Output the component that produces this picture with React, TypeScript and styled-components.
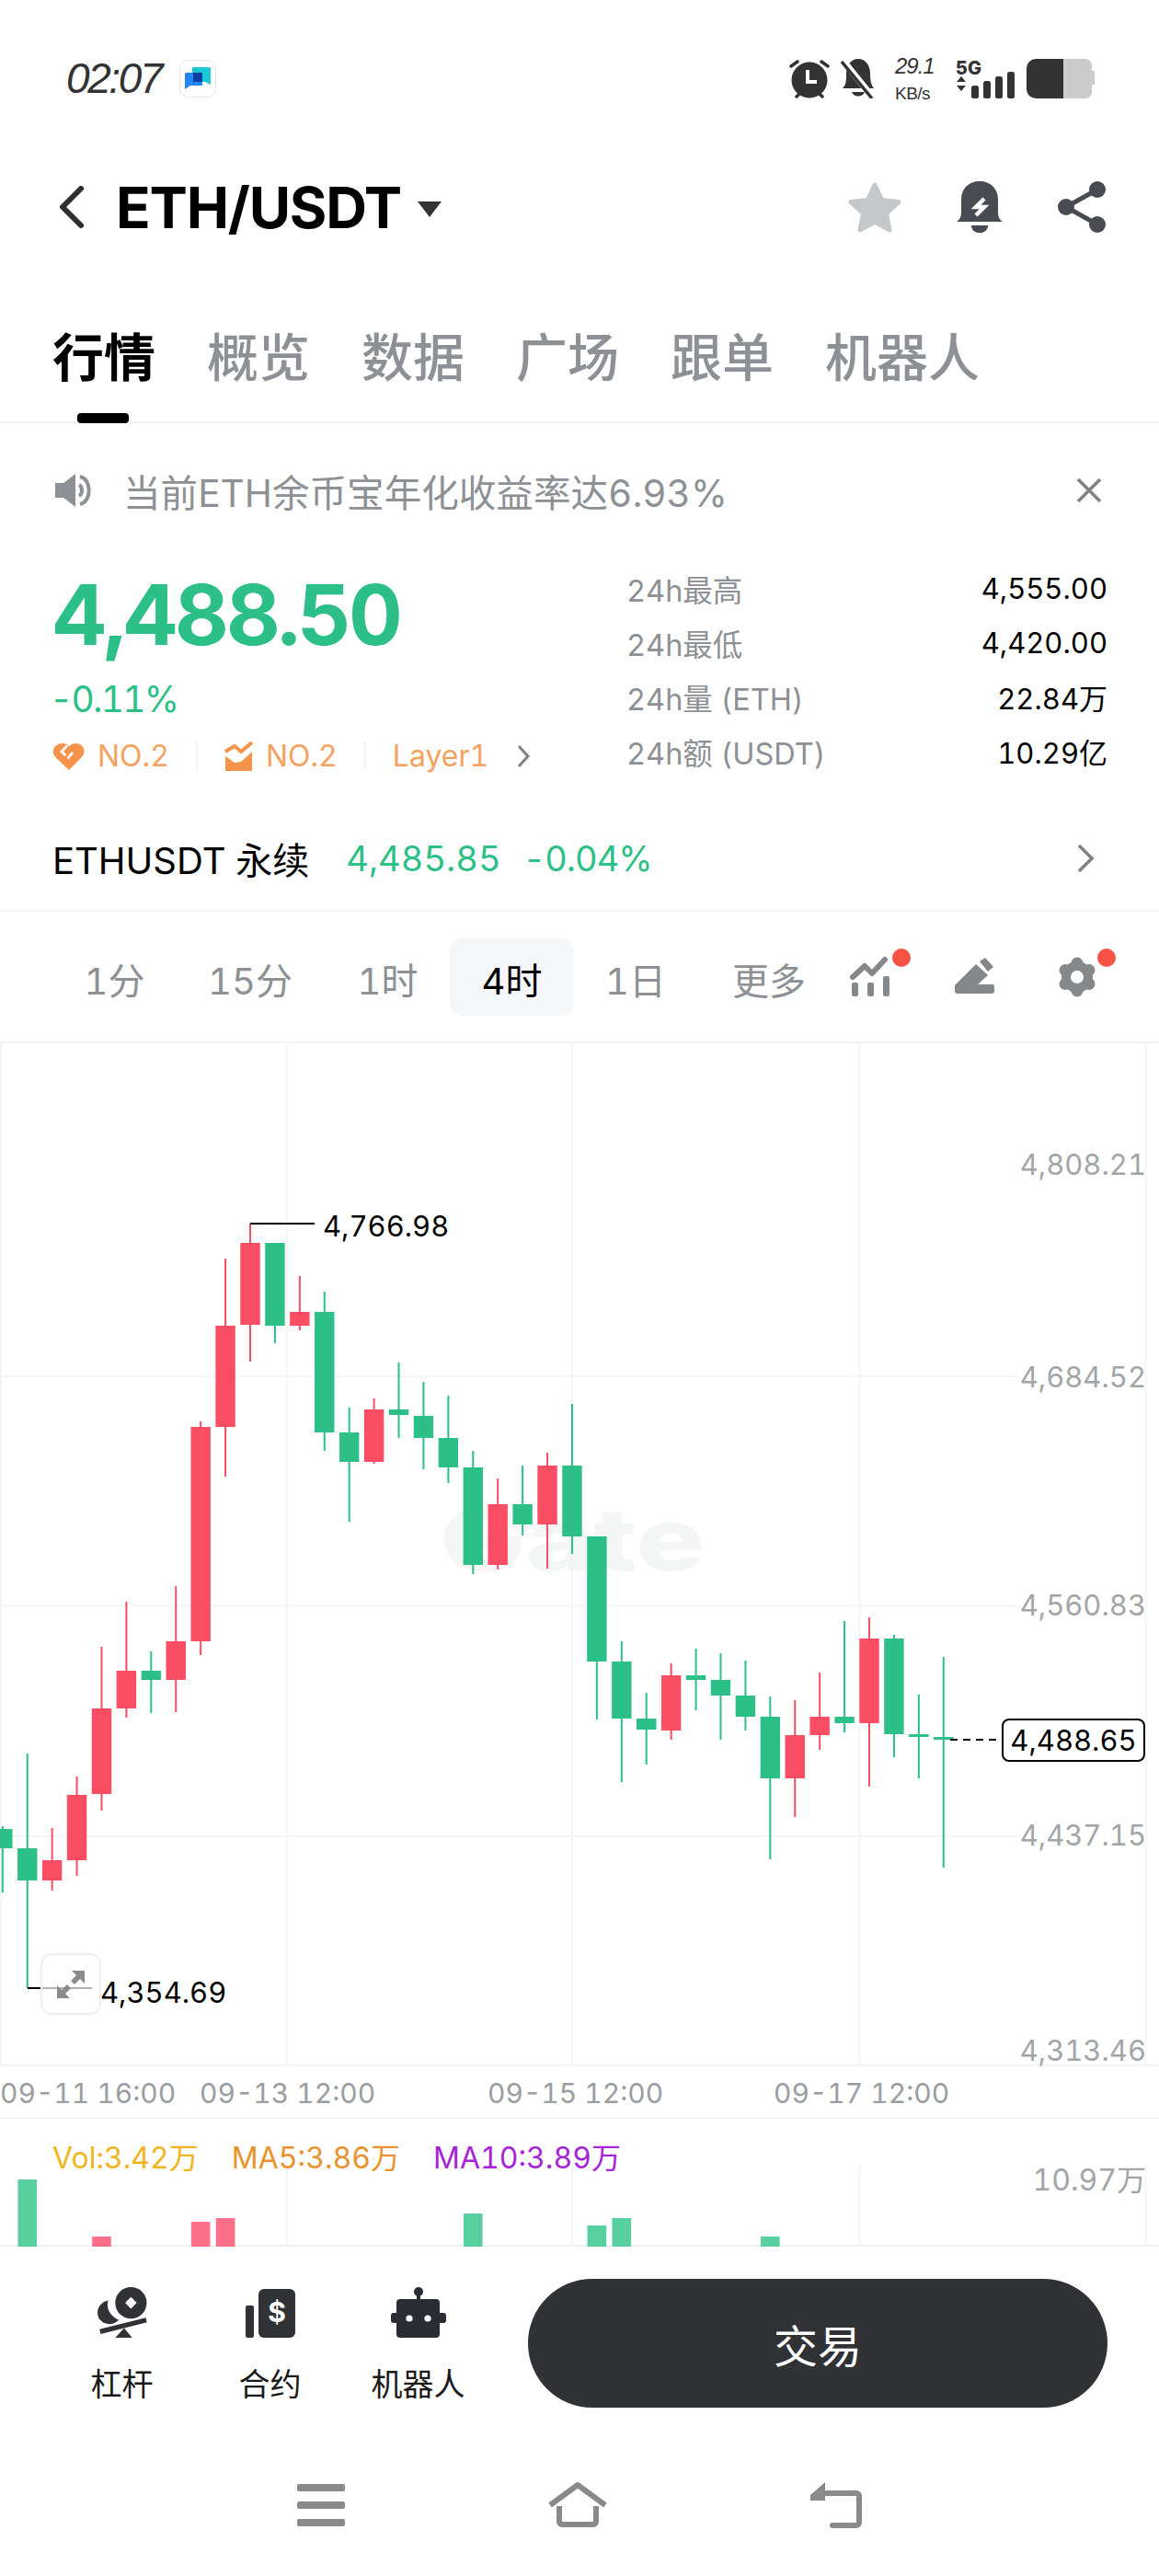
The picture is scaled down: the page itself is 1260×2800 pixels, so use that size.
import styled, { createGlobalStyle } from 'styled-components';

const SANS = `Inter, "Noto Sans CJK SC", sans-serif`;
const NARROW = `"Liberation Sans", sans-serif`;
const GREEN = '#2cbf87';
const RED = '#f84d63';
const GREY = '#8d9094';

// [wickTop, wickBottom, bodyTop, bodyBottom, isUp], one entry per 4h candle, page coordinates
const CANDLES: [number, number, number, number, boolean][] = [
  [1986, 2058, 1989, 2010, false],
  [1907, 2162, 2010, 2045, false],
  [1988, 2056, 2023, 2045, true],
  [1932, 2040, 1952, 2023, true],
  [1791, 1969, 1858, 1951, true],
  [1742, 1868, 1817, 1858, true],
  [1796, 1863, 1817, 1827, false],
  [1725, 1862, 1785, 1827, true],
  [1546, 1800, 1552, 1785, true],
  [1369, 1606, 1442, 1552, true],
  [1331, 1481, 1352, 1441, true],
  [1352, 1461, 1352, 1442, false],
  [1388, 1447, 1427, 1442, true],
  [1405, 1578, 1427, 1558, false],
  [1531, 1655, 1558, 1590, false],
  [1521, 1592, 1533, 1590, true],
  [1482, 1564, 1533, 1539, false],
  [1503, 1598, 1540, 1564, false],
  [1518, 1613, 1564, 1596, false],
  [1578, 1712, 1596, 1702, false],
  [1608, 1707, 1636, 1702, true],
  [1594, 1670, 1636, 1658, false],
  [1580, 1706, 1594, 1658, true],
  [1527, 1690, 1594, 1671, false],
  [1671, 1870, 1671, 1807, false],
  [1785, 1938, 1807, 1869, false],
  [1841, 1919, 1869, 1881, false],
  [1809, 1892, 1822, 1882, true],
  [1793, 1860, 1822, 1827, false],
  [1798, 1892, 1827, 1844, false],
  [1806, 1882, 1844, 1867, false],
  [1845, 2022, 1867, 1934, false],
  [1849, 1976, 1887, 1934, true],
  [1819, 1903, 1867, 1887, true],
  [1763, 1884, 1867, 1874, false],
  [1759, 1943, 1782, 1874, true],
  [1778, 1911, 1782, 1886, false],
  [1843, 1934, 1886, 1889, false],
  [1802, 2031, 1889, 1892, false],
];

const candleX = (i: number) => 2.8 + i * 26.92;

const AXIS_PRICES: [string, number][] = [
  ['4,808.21', 1266],
  ['4,684.52', 1497],
  ['4,560.83', 1745],
  ['4,437.15', 1995],
  ['4,313.46', 2229],
];

// [candle index, top, isUp]
const VOLUMES: [number, number, boolean][] = [
  [1, 2370, false],
  [4, 2432, true],
  [8, 2416, true],
  [9, 2412, true],
  [19, 2407, false],
  [24, 2420, false],
  [25, 2412, false],
  [31, 2432, false],
];

const STATS = [
  ['24h最高', '4,555.00'],
  ['24h最低', '4,420.00'],
  ['24h量 (ETH)', '22.84万'],
  ['24h额 (USDT)', '10.29亿'],
];

const TABS = ['行情', '概览', '数据', '广场', '跟单', '机器人'];

const INTERVALS: [string, number][] = [
  ['1分', 131],
  ['15分', 164],
  ['1时', 135],
  ['4时', 135],
  ['1日', 134],
  ['更多', 156],
];

const GEAR_LOBES = Array.from({ length: 6 }, (_, i) => {
  const a = (i * Math.PI) / 3 - Math.PI / 2;
  return [22 + 15 * Math.cos(a), 22 + 15 * Math.sin(a)];
});

const Global = createGlobalStyle`
  html, body {
    margin: 0;
    background: #fff;
    font-family: ${SANS};
    font-variant-numeric: tabular-nums;
  }
  * {
    box-sizing: border-box;
  }
`;

const Page = styled.div`
  width: 1260px;
  height: 2800px;
  overflow: hidden;
  background: #fff;
`;

const StatusBar = styled.div`
  height: 170px;
  padding: 0 70px 0 72px;
  display: flex;
  align-items: center;
  justify-content: space-between;
`;

const StatusLeft = styled.div`
  display: flex;
  align-items: center;
  gap: 20px;
`;

const Clock = styled.span`
  font-family: ${NARROW};
  font-size: 46px;
  font-style: italic;
  color: #333;
  width: 103px;
  letter-spacing: -2.4px;
  line-height: 1;
`;

const AppBadge = styled.div`
  width: 40px;
  height: 41px;
  border: 1px solid #e6e6e6;
  border-radius: 10px;
  display: flex;
  align-items: center;
  justify-content: center;
`;

const StatusRight = styled.div`
  display: flex;
  align-items: center;
`;

const Speed = styled.div`
  width: 44px;
  margin: 0 22px 0 21px;
  display: flex;
  flex-direction: column;
  gap: 8px;
  color: #333;
  line-height: 1;
  font-family: ${NARROW};
`;

const SpeedValue = styled.span`
  font-size: 24px;
  font-style: italic;
  letter-spacing: -1px;
`;

const SpeedUnit = styled.span`
  font-size: 19px;
  letter-spacing: -0.5px;
`;

const Network = styled.div`
  display: flex;
  flex-direction: column;
  margin-right: 13px;
`;

const NetworkLabel = styled.span`
  font-size: 20px;
  font-weight: 800;
  color: #333;
  line-height: 1;
  margin-bottom: 6px;
`;

const Header = styled.div`
  height: 110px;
  padding: 0 58px 0 63px;
  display: flex;
  align-items: center;
`;

const Title = styled.span`
  margin-left: 35px;
  font-size: 62px;
  font-weight: 700;
  letter-spacing: -1.2px;
  color: #000;
`;

const Caret = styled.span`
  margin: 4px 0 0 18px;
  border-left: 13px solid transparent;
  border-right: 13px solid transparent;
  border-top: 17px solid #333;
`;

const HeaderActions = styled.div`
  margin-left: auto;
  display: flex;
  align-items: center;
  gap: 60px;
`;

const Tabs = styled.div`
  height: 180px;
  padding: 79px 0 0 57px;
  display: flex;
  gap: 56px;
  border-bottom: 2px solid #f2f3f4;
`;

const Tab = styled.div<{ $active?: boolean }>`
  position: relative;
  height: 101px;
  font-size: 56px;
  font-weight: ${(p) => (p.$active ? 700 : 500)};
  line-height: 60px;
  color: ${(p) => (p.$active ? '#000' : GREY)};

  &::after {
    content: '';
    display: ${(p) => (p.$active ? 'block' : 'none')};
    position: absolute;
    left: 27px;
    bottom: 0;
    width: 56px;
    height: 11px;
    border-radius: 4px;
    background: #000;
  }
`;

const Notice = styled.div`
  height: 148px;
  padding: 0 62px 2px 60px;
  display: flex;
  align-items: center;
  color: ${GREY};
`;

const NoticeText = styled.span`
  margin-left: 32px;
  font-size: 40.6px;
`;

const NoticeClose = styled.span`
  margin-left: auto;
  display: flex;
`;

const Summary = styled.div`
  height: 262px;
  padding: 0 56px 0 57px;
  display: flex;
  justify-content: space-between;
`;

const Quote = styled.div`
  display: flex;
  flex-direction: column;
`;

const LastPrice = styled.div`
  margin-top: 6px;
  font-size: 91px;
  font-weight: 700;
  letter-spacing: -3px;
  line-height: 108px;
  color: ${GREEN};
`;

const Change = styled.div`
  margin: 15px 0 0 -3px;
  font-size: 39px;
  letter-spacing: -1.8px;
  line-height: 46px;
  color: ${GREEN};
`;

const TagRow = styled.div`
  margin-top: 17px;
  display: flex;
  align-items: center;
  color: #f6a25f;
  font-size: 32px;
  line-height: 44px;
`;

const TagLabel = styled.span`
  margin-left: 14px;
`;

const TagDivider = styled.span`
  width: 2px;
  height: 32px;
  margin: 0 29px;
  background: #f4f2ef;
`;

const StatsList = styled.div`
  width: 523px;
  padding-top: 2px;
  display: flex;
  flex-direction: column;
`;

const StatRow = styled.div`
  height: 59px;
  display: flex;
  align-items: center;
  justify-content: space-between;
`;

const StatLabel = styled.span`
  font-size: 32.5px;
  color: ${GREY};
`;

const StatValue = styled.span`
  font-size: 31px;
  color: #000;
`;

const ContractRow = styled.div`
  height: 121px;
  padding: 6px 70px 0 57px;
  display: flex;
  align-items: center;
  border-bottom: 2px solid #f2f3f4;
  font-size: 38px;
`;

const ContractName = styled.span`
  font-size: 40px;
  color: #000;
`;

const ContractPrice = styled.span<{ $gap: number; $tight?: boolean }>`
  margin-left: ${(p) => p.$gap}px;
  letter-spacing: ${(p) => (p.$tight ? '-1px' : '0')};
  color: ${GREEN};
`;

const ContractArrow = styled.span`
  margin-left: auto;
  display: flex;
`;

const Toolbar = styled.div`
  height: 143px;
  padding-left: 59px;
  display: flex;
  align-items: center;
  border-bottom: 2px solid #f2f3f4;
`;

const Interval = styled.div<{ $active?: boolean; $width: number }>`
  width: ${(p) => p.$width}px;
  height: 84px;
  padding-top: 5px;
  display: flex;
  align-items: center;
  justify-content: center;
  border-radius: 14px;
  font-size: 40px;
  color: ${(p) => (p.$active ? '#000' : GREY)};
  background: ${(p) => (p.$active ? '#f5f6f7' : 'transparent')};
`;

const ToolIcon = styled.div<{ $left: number; $dot?: boolean }>`
  position: relative;
  margin-left: ${(p) => p.$left}px;
  display: flex;

  &::after {
    content: '';
    display: ${(p) => (p.$dot ? 'block' : 'none')};
    position: absolute;
    top: -9px;
    right: -20px;
    width: 20px;
    height: 20px;
    border-radius: 50%;
    background: #f75246;
  }
`;

const ChartPanel = styled.div`
  position: relative;
  height: 1110px;
`;

const ChartSvg = styled.svg`
  display: block;
  overflow: visible;
`;

const AxisText = styled.text`
  font-family: ${SANS};
  font-size: 31px;
  fill: #a2a5a8;
  text-anchor: end;
  dominant-baseline: central;
`;

const MarkText = styled.text`
  font-family: ${SANS};
  font-size: 31px;
  fill: #000;
  dominant-baseline: central;
`;

const Watermark = styled.text`
  font-family: ${SANS};
  font-size: 94px;
  font-weight: 800;
  fill: #f4f6f6;
`;

const PriceTag = styled.div`
  position: absolute;
  left: 1089px;
  top: 734px;
  width: 156px;
  height: 47px;
  border: 2px solid #000;
  border-radius: 8px;
  background: #fff;
  display: flex;
  align-items: center;
  justify-content: center;
  font-size: 31px;
  color: #000;
`;

const ExpandButton = styled.div`
  position: absolute;
  left: 44px;
  top: 989px;
  width: 66px;
  height: 67px;
  border: 2px solid #eeeff0;
  border-radius: 12px;
  background: rgba(255, 255, 255, 0.7);
  display: flex;
  align-items: center;
  justify-content: center;
`;

const TimeAxis = styled.div`
  height: 59px;
  padding-top: 2px;
  display: grid;
  grid-template-columns: 217px 313px 311px 1fr;
  align-items: center;
  border-top: 2px solid #f3f4f5;
  border-bottom: 2px solid #f3f4f5;
  font-size: 30px;
  color: #9a9da1;
`;

const VolumePanel = styled.div`
  position: relative;
  height: 139px;
  border-bottom: 2px solid #f0f1f2;
`;

const VolumeLegend = styled.div`
  position: absolute;
  left: 57px;
  top: 24px;
  display: flex;
  gap: 36px;
  font-size: 32px;
  line-height: 38px;
`;

const LegendItem = styled.span<{ $color: string }>`
  color: ${(p) => p.$color};
`;

const VolumeMax = styled.span`
  position: absolute;
  right: 14px;
  top: 47px;
  font-size: 32px;
  line-height: 40px;
  color: #a2a5a8;
`;

const VolumeBars = styled.svg`
  display: block;
`;

const ActionBar = styled.div`
  height: 196px;
  padding: 35px 56px 0 52px;
  display: flex;
`;

const ActionItem = styled.div`
  width: 161px;
  height: 140px;
  display: flex;
  flex-direction: column;
  align-items: center;
  font-size: 34px;
  color: #1a1a1a;
`;

const ActionIcon = styled.div`
  height: 76px;
  margin-bottom: 12px;
  display: flex;
  align-items: center;
`;

const TradeButton = styled.div`
  width: 630px;
  height: 140px;
  margin-left: 39px;
  border-radius: 70px;
  background: #303236;
  color: #fff;
  font-size: 48px;
  display: flex;
  align-items: center;
  justify-content: center;
`;

const NavBar = styled.div`
  height: 160px;
  padding-top: 10px;
  display: flex;
  align-items: center;
  justify-content: center;
  gap: 220px;
`;

const App = () => {
  return (
    <Page>
      <Global />
      <StatusBar>
        <StatusLeft>
          <Clock>02:07</Clock>
          <AppBadge>
            <svg width="30" height="28" viewBox="0 0 30 28">
              <path d="M9 2h18a2 2 0 0 1 2 2v17l-6-3H9z" fill="#19c7d6" />
              <path d="M3 8h15a2 2 0 0 1 2 2v12H7l-6 4V10a2 2 0 0 1 2-2z" fill="#2384f5" />
              <rect x="10" y="8" width="10" height="10" fill="#0d3f9e" />
            </svg>
          </AppBadge>
        </StatusLeft>
        <StatusRight>
          <svg width="46" height="44" viewBox="0 0 46 44">
            <g stroke="#333" strokeWidth="3.5" strokeLinecap="round">
              <path d="M3 9l7-5M43 9l-7-5M9 42l4-4M37 42l-4-4" />
            </g>
            <circle cx="23" cy="24" r="19.5" fill="#333" />
            <path d="M21 13v13h10" stroke="#fff" strokeWidth="4" fill="none" />
          </svg>
          <svg width="38" height="44" viewBox="0 0 38 44" style={{ marginLeft: 11 }}>
            <path d="M2 33c4-4 4-8 4-16C6 8 11 1 19 1s13 7 13 16c0 8 1 12 4 16z" fill="#333" />
            <path d="M12 37h14c-2 6-12 6-14 0z" fill="#333" />
            <path d="M1 1l34 42" stroke="#fff" strokeWidth="7" />
            <path d="M1 4l33 40" stroke="#333" strokeWidth="3.5" />
          </svg>
          <Speed>
            <SpeedValue>29.1</SpeedValue>
            <SpeedUnit>KB/s</SpeedUnit>
          </Speed>
          <Network>
            <NetworkLabel>5G</NetworkLabel>
            <svg width="64" height="29" viewBox="0 0 64 29" style={{ marginTop: -12 }}>
              <path d="M1 11l5-6 5 6zM1 15h10l-5 6z" fill="#333" />
              <rect x="17" y="15" width="8" height="14" rx="2.5" fill="#333" />
              <rect x="30" y="10" width="8" height="19" rx="2.5" fill="#333" />
              <rect x="43" y="5" width="8" height="24" rx="2.5" fill="#333" />
              <rect x="56" y="0" width="8" height="29" rx="2.5" fill="#333" />
            </svg>
          </Network>
          <svg width="74" height="43" viewBox="0 0 74 43">
            <path d="M40 0h24a7 7 0 0 1 7 7v6h3v15h-3v8a7 7 0 0 1-7 7H40z" fill="#ccc" />
            <path d="M10 0h30v43H10A10 10 0 0 1 0 33V10A10 10 0 0 1 10 0z" fill="#333" />
          </svg>
        </StatusRight>
      </StatusBar>

      <Header>
        <svg width="28" height="46" viewBox="0 0 28 46">
          <path d="M25 3L5 23l20 20" fill="none" stroke="#2c2e32" strokeWidth="6" strokeLinecap="round" strokeLinejoin="round" />
        </svg>
        <Title>ETH/USDT</Title>
        <Caret />
        <HeaderActions>
          <svg width="58" height="56" viewBox="0 0 58 56">
            <path
              d="M29 4l7.6 16.4 18.4 2.2-13.6 12.2 3.6 18.2L29 44l-16 9 3.6-18.2L3 22.6l18.4-2.2z"
              fill="#c4c8ca"
              stroke="#c4c8ca"
              strokeWidth="5"
              strokeLinejoin="round"
            />
          </svg>
          <svg width="50" height="56" viewBox="0 0 50 56">
            <path d="M0 44c4-3 5-5 5-12V20C5 8 13 0 25 0s20 8 20 20v12c0 7 1 9 5 12z" fill="#484b51" />
            <path d="M16 48h18c0 11-18 11-18 0z" fill="#484b51" />
            <path d="M30 19l-9 9h9l-9 9" fill="none" stroke="#fff" strokeWidth="4.5" />
          </svg>
          <svg width="52" height="56" viewBox="0 0 52 56">
            <path d="M9 28L43 9M9 28l34 19" stroke="#484b51" strokeWidth="5" />
            <circle cx="9" cy="28" r="9" fill="#484b51" />
            <circle cx="43" cy="9" r="9" fill="#484b51" />
            <circle cx="43" cy="47" r="9" fill="#484b51" />
          </svg>
        </HeaderActions>
      </Header>

      <Tabs>
        {TABS.map((t, i) => (
          <Tab key={t} $active={i === 0}>
            {t}
          </Tab>
        ))}
      </Tabs>

      <Notice>
        <svg width="42" height="36" viewBox="0 0 42 36">
          <path d="M0 10h9L22 0v36L9 26H0z" fill={GREY} />
          <path d="M27 3c13 3 13 27 0 30" fill="none" stroke={GREY} strokeWidth="4" />
          <path d="M26 12c4 2 4 10 0 12" fill="none" stroke={GREY} strokeWidth="4" />
        </svg>
        <NoticeText>当前ETH余币宝年化收益率达6.93%</NoticeText>
        <NoticeClose>
          <svg width="28" height="28" viewBox="0 0 28 28">
            <path d="M2 2l24 24M26 2L2 26" stroke="#7f8286" strokeWidth="3.6" />
          </svg>
        </NoticeClose>
      </Notice>

      <Summary>
        <Quote>
          <LastPrice>4,488.50</LastPrice>
          <Change>-0.11%</Change>
          <TagRow>
            <svg width="34" height="31" viewBox="20 46 100 92" style={{ marginLeft: 1 }}>
              <path d="M70 135L28 95C8 75 25 48 50 49c9 0 16 5 20 10 5-5 12-10 22-10 24 0 37 27 17 47z" fill="#f6934a" />
              <path d="M64 56L46 76l14 12M82 78L66 98" fill="none" stroke="#fff" strokeWidth="8" />
            </svg>
            <TagLabel>NO.2</TagLabel>
            <TagDivider />
            <svg width="31" height="32" viewBox="0 0 31 32">
              <path d="M1 16l10 7 7-1 12-11v21H1z" fill="#f6934a" />
              <path d="M1 11l10-6 7 6 12-10" fill="none" stroke="#f6934a" strokeWidth="4" />
            </svg>
            <TagLabel>NO.2</TagLabel>
            <TagDivider />
            <span>Layer1</span>
            <svg width="16" height="26" viewBox="0 0 16 26" style={{ marginLeft: 30 }}>
              <path d="M3 2l10 11L3 24" fill="none" stroke="#7f8286" strokeWidth="3" />
            </svg>
          </TagRow>
        </Quote>
        <StatsList>
          {STATS.map(([label, value]) => (
            <StatRow key={label}>
              <StatLabel>{label}</StatLabel>
              <StatValue>{value}</StatValue>
            </StatRow>
          ))}
        </StatsList>
      </Summary>

      <ContractRow>
        <ContractName>ETHUSDT 永续</ContractName>
        <ContractPrice $gap={40}>4,485.85</ContractPrice>
        <ContractPrice $gap={24} $tight>-0.04%</ContractPrice>
        <ContractArrow>
          <svg width="20" height="32" viewBox="0 0 20 32">
            <path d="M3 2l14 14L3 30" fill="none" stroke="#7f8286" strokeWidth="3.6" />
          </svg>
        </ContractArrow>
      </ContractRow>

      <Toolbar>
        {INTERVALS.map(([label, width]) => (
          <Interval key={label} $width={width} $active={label === '4时'}>
            {label}
          </Interval>
        ))}
        <ToolIcon $left={10} $dot>
          <svg width="46" height="44" viewBox="0 0 46 44">
            <path d="M3 22L16 10l8 8L38 3" fill="none" stroke="#85888b" strokeWidth="6" strokeLinecap="round" strokeLinejoin="round" />
            <rect x="2" y="28" width="7" height="15" rx="2" fill="#85888b" />
            <rect x="19" y="28" width="7" height="15" rx="2" fill="#85888b" />
            <rect x="36" y="21" width="7" height="22" rx="2" fill="#85888b" />
          </svg>
        </ToolIcon>
        <ToolIcon $left={67}>
          <svg width="44" height="44" viewBox="0 0 44 44">
            <path d="M1 31L24 8l13 12-11 10h16a2 2 0 0 1 2 2v5a3 3 0 0 1-3 3H4a3 3 0 0 1-3-3z" fill="#85888b" />
            <path d="M28 5l6-4 9 10-6 5z" fill="#85888b" />
          </svg>
        </ToolIcon>
        <ToolIcon $left={68} $dot>
          <svg width="44" height="44" viewBox="0 0 44 44">
            <circle cx="22" cy="22" r="17" fill="#85888b" />
            {GEAR_LOBES.map(([cx, cy]) => (
              <circle key={`${cx}-${cy}`} cx={cx} cy={cy} r="6.5" fill="#85888b" />
            ))}
            <circle cx="22" cy="22" r="7" fill="#fff" />
          </svg>
        </ToolIcon>
      </Toolbar>

      <ChartPanel>
        <ChartSvg width="1260" height="1110" viewBox="0 1135 1260 1110">
          <g stroke="#f4f5f6" strokeWidth="2">
            {[1, 312, 622, 934.5, 1245.5].map((x) => (
              <line key={x} x1={x} y1="1135" x2={x} y2="2245" />
            ))}
            {[1497, 1746.5, 1997].map((y) => (
              <line key={y} x1="0" y1={y} x2="1108" y2={y} />
            ))}
          </g>
          <Watermark x="478" y="1708" textLength={288} lengthAdjust="spacingAndGlyphs">
            Gate
          </Watermark>
          {CANDLES.map(([wt, wb, bt, bb, up], i) => (
            <g key={i} fill={up ? RED : GREEN}>
              <rect x={candleX(i) - 1} y={wt} width="2" height={wb - wt} />
              <rect x={candleX(i) - 10.7} y={bt} width="21.4" height={Math.max(bb - bt, 2)} />
            </g>
          ))}
          {AXIS_PRICES.map(([label, y]) => (
            <AxisText key={label} x="1246" y={y}>
              {label}
            </AxisText>
          ))}
          <path d="M272 1331h70M30 2162h70" stroke="#000" strokeWidth="2" fill="none" />
          <MarkText x="351" y="1333">4,766.98</MarkText>
          <MarkText x="109" y="2166">4,354.69</MarkText>
          <path d="M1033 1892h50" stroke="#000" strokeWidth="2" strokeDasharray="8 6" />
        </ChartSvg>
        <PriceTag>4,488.65</PriceTag>
        <ExpandButton>
          <svg width="32" height="32" viewBox="0 0 32 32">
            <path d="M31 1v14l-5-5-6 6-4-4 6-6-5-5zM1 31V17l5 5 6-6 4 4-6 6 5 5z" fill="#8b8b8b" />
          </svg>
        </ExpandButton>
      </ChartPanel>

      <TimeAxis>
        <span>09-11 16:00</span>
        <span>09-13 12:00</span>
        <span>09-15 12:00</span>
        <span>09-17 12:00</span>
      </TimeAxis>

      <VolumePanel>
        <VolumeBars width="1260" height="139" viewBox="0 2304 1260 139">
          <g stroke="#f4f5f6" strokeWidth="2">
            {[312, 622, 934.5, 1245.5].map((x) => (
              <line key={x} x1={x} y1="2354" x2={x} y2="2443" />
            ))}
          </g>
          {VOLUMES.map(([i, top, up]) => (
            <rect key={i} x={candleX(i) - 10.3} y={top} width="20.6" height={2443 - top} fill={up ? '#fb7088' : '#57cf9f'} />
          ))}
        </VolumeBars>
        <VolumeLegend>
          <LegendItem $color="#f0b41c">Vol:3.42万</LegendItem>
          <LegendItem $color="#e9922c">MA5:3.86万</LegendItem>
          <LegendItem $color="#a624d6">MA10:3.89万</LegendItem>
        </VolumeLegend>
        <VolumeMax>10.97万</VolumeMax>
      </VolumePanel>

      <ActionBar>
        <ActionItem>
          <ActionIcon>
            <svg width="56" height="60" viewBox="24 12 58 62">
              <circle cx="62.7" cy="30.7" r="17.7" fill="#303236" />
              <path d="M62.7 24l6.5 6.7-6.5 6.7-6.5-6.7z" fill="#fff" />
              <path d="M37 28c-9 2-14 10-11 19 3 6 10 9 17 7 2-1 4-2 6-4-8-3-15-12-12-22z" fill="#303236" />
              <path d="M28 63l52-13" stroke="#303236" strokeWidth="5.5" />
              <path d="M45 70h19l-9-11z" fill="#303236" />
            </svg>
          </ActionIcon>
          杠杆
        </ActionItem>
        <ActionItem>
          <ActionIcon>
            <svg width="54" height="54" viewBox="0 0 54 54">
              <rect x="14" y="0" width="40" height="53" rx="6" fill="#303236" />
              <rect x="0" y="18" width="9" height="35" rx="2" fill="#303236" />
              <text x="34" y="36" fill="#fff" fontFamily="Inter" fontWeight="700" fontSize="30" textAnchor="middle">$</text>
            </svg>
          </ActionIcon>
          合约
        </ActionItem>
        <ActionItem>
          <ActionIcon>
            <svg width="60" height="58" viewBox="0 0 60 58">
              <circle cx="30" cy="5" r="5" fill="#2a2c33" />
              <rect x="28" y="5" width="4" height="10" fill="#2a2c33" />
              <rect x="6" y="13" width="47" height="42" rx="4" fill="#2a2c33" />
              <rect x="0" y="28" width="60" height="11" rx="3" fill="#2a2c33" />
              <circle cx="20" cy="34" r="3.6" fill="#fff" />
              <circle cx="40" cy="34" r="3.6" fill="#fff" />
            </svg>
          </ActionIcon>
          机器人
        </ActionItem>
        <TradeButton>交易</TradeButton>
      </ActionBar>

      <NavBar>
        <svg width="52" height="46" viewBox="0 0 52 46">
          <rect x="0" y="0" width="52" height="8" rx="2" fill="#8a8a8a" />
          <rect x="0" y="19" width="52" height="8" rx="2" fill="#8a8a8a" />
          <rect x="0" y="38" width="52" height="8" rx="2" fill="#8a8a8a" />
        </svg>
        <svg width="66" height="50" viewBox="0 0 66 50">
          <path d="M3 25L33 3l30 22M13 26v17a3 3 0 0 0 3 3h34a3 3 0 0 0 3-3V26" fill="none" stroke="#8a8a8a" strokeWidth="6" strokeLinejoin="round" />
        </svg>
        <svg width="56" height="50" viewBox="0 0 56 50">
          <path d="M12 12h38a3 3 0 0 1 3 3v29a3 3 0 0 1-3 3H24" fill="none" stroke="#8a8a8a" strokeWidth="6" strokeLinecap="round" />
          <path d="M16 0v20H0V14z" fill="#8a8a8a" />
        </svg>
      </NavBar>
    </Page>
  );
};

export default App;
